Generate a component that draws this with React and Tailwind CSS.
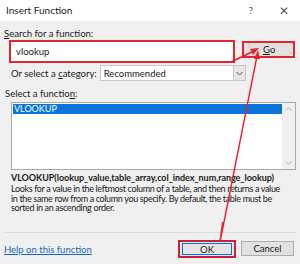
import React from 'react'

const Arrows = () => (
    <svg className="absolute left-0 top-0 pointer-events-none" width="300" height="264" viewBox="0 0 300 264">
        <line x1="231" y1="62" x2="254" y2="51" stroke="#e8212f" strokeWidth="1.6" />
        <polygon points="259,48 250,49 253,55" fill="#e8212f" />
        <line x1="220" y1="242" x2="257" y2="56" stroke="#e8212f" strokeWidth="1.4" />
        <polygon points="258,50 254,59 260,59" fill="#e8212f" />
        <polygon points="219,243 224,222 222,222" fill="#e8212f" />
    </svg>
)

const App = () => {
    return (
        <div className="relative w-[300px] h-[264px] overflow-hidden bg-[#f0f0f0] text-[#1a1a1a] text-[9.5px] leading-[11px]" style={{ fontFamily: 'Lato, "Noto Sans", sans-serif' }}>
            <div className="h-[21px] bg-white flex items-center pl-[6px] pr-[11px]">
                <span className="text-[10px] text-[#222]">Insert Function</span>
                <span className="ml-auto text-[10px] text-[#555]">?</span>
                <span className="ml-[26px] text-[12px] text-[#555] font-light">✕</span>
            </div>

            <div className="pl-[4px] pr-[4px]">
                <div className="mt-[7px] h-[11px]"><span className="underline">S</span>earch for a function:</div>
                <div className="mt-[1px] flex items-start">
                    <div className="ml-[5px] w-[226px] h-[23px] border-2 border-[#e0262f] bg-white pl-[5px] pt-[4px]">vlookup</div>
                    <div className="ml-[7px] mt-[1px] w-[53px] h-[17px] border-2 border-[#e0262f] bg-[#e1e1e1] pl-[19px] pt-[1px]"><span className="underline">G</span>o</div>
                </div>
                <div className="mt-[2px] flex items-center h-[16px]">
                    <span className="ml-[7px]">Or select a <span className="underline">c</span>ategory:</span>
                    <div className="ml-[3px] w-[146px] h-[16px] bg-white border border-[#c8c8c8] flex items-center">
                        <span className="pl-[3px]">Recommended</span>
                        <div className="ml-auto h-full w-[12px] bg-[#e6e6e6] border-l border-[#c8c8c8] flex items-center justify-center">
                            <svg width="7" height="5" viewBox="0 0 7 5"><path d="M0.5 1 L3.5 4 L6.5 1" fill="none" stroke="#555" strokeWidth="1" /></svg>
                        </div>
                    </div>
                </div>
                <div className="mt-[7px] ml-[1px] h-[11px]">Select a functio<span className="underline">n</span>:</div>
                <div className="mt-[3px] ml-[7px] w-[285px] h-[68px] bg-white border border-[#aaaaaa] flex">
                    <div className="flex-1 pt-[1px] pl-[1px]">
                        <div className="h-[10px] bg-[#0a74d8] text-white text-[9px] leading-[10px] pl-[1px]">VLOOKUP</div>
                    </div>
                    <div className="w-[13px] bg-[#f0f0f0] flex flex-col items-center justify-between py-[4px]">
                        <svg width="7" height="4" viewBox="0 0 7 4"><path d="M0.5 3.5 L3.5 0.5 L6.5 3.5" fill="none" stroke="#b0b0b0" strokeWidth="1" /></svg>
                        <svg width="7" height="4" viewBox="0 0 7 4"><path d="M0.5 0.5 L3.5 3.5 L6.5 0.5" fill="none" stroke="#b0b0b0" strokeWidth="1" /></svg>
                    </div>
                </div>
                <div className="mt-[2px] ml-[7px] font-bold text-[9px] leading-[11px] tracking-[-0.05px] whitespace-nowrap">VLOOKUP(lookup_value,table_array,col_index_num,range_lookup)</div>
                <div className="mt-[1px] ml-[7px] text-[9px] leading-[9.7px] whitespace-nowrap tracking-[-0.35px]">
                    Looks for a value in the leftmost column of a table, and then returns a value<br />
                    in the same row from a column you specify. By default, the table must be<br />
                    sorted in an ascending order.
                </div>
            </div>

            <div className="mt-[19px] h-px bg-[#dcdcdc] mx-[4px]" />

            <div className="mt-[7px] flex items-start">
                <span className="ml-[4px] mt-[4px] text-[#1565c0] underline">Help on this function</span>
                <div className="ml-auto w-[58px] h-[18px] border-2 border-[#c8233b] bg-[#e5e5e5] flex items-center justify-center">
                    <div className="w-[50px] h-[12px] border border-[#0078d7] flex items-center justify-center">OK</div>
                </div>
                <div className="ml-[5px] mr-[6px] mt-[1px] w-[53px] h-[15px] border border-[#adadad] bg-[#e1e1e1] flex items-center justify-center">Cancel</div>
            </div>

            <Arrows />
        </div>
    )
}

export default App
